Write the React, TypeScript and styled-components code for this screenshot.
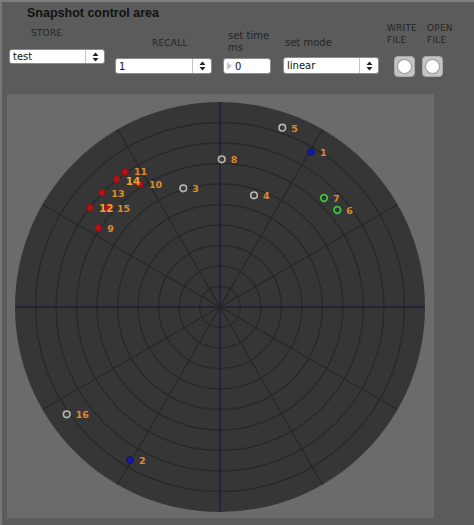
import React from 'react';
import styled, { createGlobalStyle } from 'styled-components';

const GlobalStyle = createGlobalStyle`
  html, body {
    margin: 0;
    padding: 0;
    background: #5b5b5b;
  }
`;

const Frame = styled.div`
  box-sizing: border-box;
  width: 474px;
  height: 525px;
  background: #5b5b5b;
  border-top: 2px solid #7f7f7f;
  border-left: 2px solid #777;
  font-family: 'DejaVu Sans', 'Liberation Sans', sans-serif;
  overflow: hidden;
`;

const Title = styled.h1`
  margin: 4px 0 0 25px;
  font-family: 'Liberation Sans', Arial, sans-serif;
  font-size: 12.5px;
  line-height: 15px;
  font-weight: 700;
  color: #111;
`;

const Controls = styled.div`
  display: flex;
  align-items: flex-end;
  height: 56px;
  padding-left: 7px;
`;

const Group = styled.div<{ $width: number; $gap: number; $lift?: number; $space: number }>`
  display: flex;
  flex-direction: column;
  width: ${({ $width }) => $width}px;
  margin-left: ${({ $space }) => $space}px;
  margin-bottom: ${({ $lift }) => $lift ?? 0}px;
  gap: ${({ $gap }) => $gap}px;
`;

const Label = styled.div<{ $indent?: number; $caps?: boolean }>`
  padding-left: ${({ $indent }) => $indent ?? 0}px;
  font-size: ${({ $caps }) => ($caps ? 9 : 10)}px;
  line-height: 12px;
  color: #262626;
  white-space: pre;
  letter-spacing: ${({ $caps }) => ($caps ? '0.2px' : '0')};
`;

const Box = styled.div<{ $height: number }>`
  box-sizing: border-box;
  display: flex;
  align-items: center;
  height: ${({ $height }) => $height}px;
  background: #fff;
  border: 1px solid #8c8c8c;
  border-radius: 3px;
  overflow: hidden;
`;

const Value = styled.span`
  flex: 1;
  padding-left: 3px;
  font-size: 10px;
  color: #111;
`;

const Spinner = styled.span`
  display: flex;
  align-items: center;
  justify-content: center;
  width: 18px;
  height: 100%;
  border-left: 1px solid #c4c4c4;
`;

const NumberArrow = styled.span`
  width: 0;
  height: 0;
  margin-left: 3px;
  border-top: 4px solid transparent;
  border-bottom: 4px solid transparent;
  border-left: 5px solid #c8c8c8;
`;

const ButtonRow = styled.div<{ $indent: number }>`
  display: flex;
  padding-left: ${({ $indent }) => $indent}px;
`;

const RoundButton = styled.button`
  box-sizing: border-box;
  display: flex;
  align-items: center;
  justify-content: center;
  width: 21px;
  height: 21px;
  padding: 0;
  background: #c5c5c5;
  border: 1px solid #a9a9a9;
  border-radius: 4px;

  &::after {
    content: '';
    width: 13px;
    height: 13px;
    border-radius: 50%;
    background: #fff;
    box-shadow: 0 0 1px 1px #9a9a9a;
  }
`;

const Panel = styled.div`
  width: 427px;
  height: 424px;
  margin: 17px 0 0 5px;
  background: #6b6b6b;
`;

const Dot = styled.circle<{ $kind: string }>`
  ${({ $kind }) =>
    ({
      gray: 'fill: #3c3c3c; stroke: #b8b8b8; stroke-width: 1.6px;',
      green: 'fill: #343434; stroke: #3cc63c; stroke-width: 1.7px;',
      red: 'fill: #b3141a; stroke: #8e1015; stroke-width: 1px;',
      blue: 'fill: #1717a8; stroke: #10107a; stroke-width: 1px;',
    })[$kind]}
`;

const Tag = styled.text<{ $strong?: boolean }>`
  font-family: 'DejaVu Sans', sans-serif;
  font-size: ${({ $strong }) => ($strong ? 10.5 : 9.5)}px;
  font-weight: ${({ $strong }) => ($strong ? 700 : 600)};
  fill: ${({ $strong }) => ($strong ? '#f2a02a' : '#e0892a')};
  dominant-baseline: central;
`;

const Spin = () => (
  <Spinner>
    <svg width="7" height="10" viewBox="0 0 7 10">
      <path d="M3.5 0.5 L6.5 4 L0.5 4 Z M3.5 9.5 L6.5 6 L0.5 6 Z" fill="#222" />
    </svg>
  </Spinner>
);

const Select = ({ value, height }: { value: string; height: number }) => (
  <Box $height={height}>
    <Value>{value}</Value>
    <Spin />
  </Box>
);

type Point = { id: string; x: number; y: number; kind: string; strong?: boolean; dy?: number };

const points: Point[] = [
  { id: '5', x: 275.3, y: 33.7, kind: 'gray' },
  { id: '1', x: 304, y: 58, kind: 'blue' },
  { id: '8', x: 214.7, y: 65.3, kind: 'gray' },
  { id: '3', x: 176.3, y: 94.3, kind: 'gray' },
  { id: '4', x: 247, y: 101.3, kind: 'gray' },
  { id: '7', x: 317, y: 104, kind: 'green' },
  { id: '6', x: 330.3, y: 116, kind: 'green' },
  { id: '11', x: 118, y: 78, kind: 'red', dy: -1.5 },
  { id: '14', x: 109.7, y: 85.3, kind: 'red', strong: true, dy: 1 },
  { id: '10', x: 133, y: 90.3, kind: 'red' },
  { id: '13', x: 95.3, y: 98.7, kind: 'red' },
  { id: '15', x: 101, y: 113.7, kind: 'red' },
  { id: '12', x: 83, y: 113.7, kind: 'red', strong: true },
  { id: '9', x: 91.3, y: 133.7, kind: 'red' },
  { id: '16', x: 59.7, y: 320.3, kind: 'gray' },
  { id: '2', x: 123, y: 366, kind: 'blue' },
];

const CX = 213;
const CY = 213;
const R = 205;

const PolarPlot = () => {
  const rings = Array.from({ length: 9 }, (_, i) => (R * (i + 1)) / 10);
  const spokes = Array.from({ length: 6 }, (_, i) => (i * Math.PI) / 6);

  return (
    <svg width="427" height="424" viewBox="0 0 427 424">
      <circle cx={CX} cy={CY} r={R} fill="#363636" />
      {rings.map((r) => (
        <circle key={r} cx={CX} cy={CY} r={r} fill="none" stroke="#282828" strokeWidth="1.3" />
      ))}
      {spokes.map((a, i) => {
        const axis = i === 0 || i === 3;
        const dx = Math.cos(a) * R;
        const dy = Math.sin(a) * R;
        return (
          <line
            key={a}
            x1={CX - dx}
            y1={CY - dy}
            x2={CX + dx}
            y2={CY + dy}
            stroke={axis ? '#1c1c3e' : '#282828'}
            strokeWidth={axis ? 1.4 : 1.3}
          />
        );
      })}
      {points.map((p) => (
        <Dot key={p.id} $kind={p.kind} cx={p.x} cy={p.y} r={3.3} />
      ))}
      {points.map((p) => (
        <Tag key={p.id} $strong={p.strong} x={p.x + 9} y={p.y + 0.5 + (p.dy ?? 0)}>
          {p.id}
        </Tag>
      ))}
    </svg>
  );
};

export default function App() {
  return (
    <Frame>
      <GlobalStyle />
      <Title>Snapshot control area</Title>

      <Controls>
        <Group $space={0} $width={96} $gap={10} $lift={13}>
          <Label $caps $indent={22}>STORE</Label>
          <Select value="test" height={15} />
        </Group>

        <Group $space={10} $width={97} $gap={9} $lift={3}>
          <Label $caps $indent={37}>RECALL</Label>
          <Select value="1" height={16} />
        </Group>

        <Group $space={11} $width={48} $gap={4} $lift={3}>
          <Label $indent={5}>{'set time\nms'}</Label>
          <Box $height={16}>
            <NumberArrow />
            <Value>0</Value>
          </Box>
        </Group>

        <Group $space={12} $width={96} $gap={8} $lift={3}>
          <Label $indent={2}>set mode</Label>
          <Select value="linear" height={17} />
        </Group>

        <Group $space={8} $width={32} $gap={10}>
          <Label $caps>{'WRITE\nFILE'}</Label>
          <ButtonRow $indent={7}>
            <RoundButton aria-label="write file" />
          </ButtonRow>
        </Group>

        <Group $space={3} $width={32} $gap={10}>
          <Label $caps $indent={5}>{'OPEN\nFILE'}</Label>
          <ButtonRow $indent={0}>
            <RoundButton aria-label="open file" />
          </ButtonRow>
        </Group>
      </Controls>

      <Panel>
        <PolarPlot />
      </Panel>
    </Frame>
  );
}
